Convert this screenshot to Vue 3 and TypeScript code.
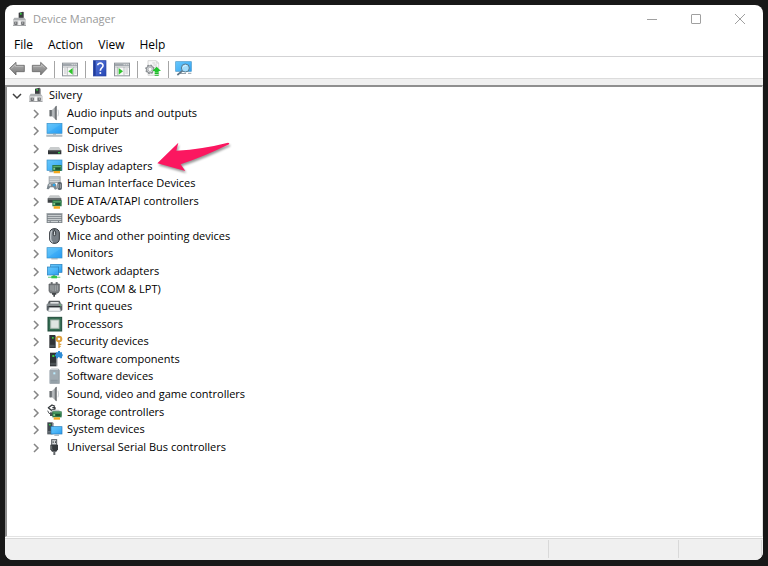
<script setup lang="ts">
import { ref } from 'vue'

interface DeviceClass {
  label: string
  icon: string
  marked?: boolean
}

const expanded = ref(true)
const menus: string[] = ['File', 'Action', 'View', 'Help']
const devices: DeviceClass[] = [
  { label: 'Audio inputs and outputs', icon: 'audio' },
  { label: 'Computer', icon: 'computer' },
  { label: 'Disk drives', icon: 'disk' },
  { label: 'Display adapters', icon: 'display', marked: true },
  { label: 'Human Interface Devices', icon: 'hid' },
  { label: 'IDE ATA/ATAPI controllers', icon: 'ide' },
  { label: 'Keyboards', icon: 'keyboard' },
  { label: 'Mice and other pointing devices', icon: 'mouse' },
  { label: 'Monitors', icon: 'monitor' },
  { label: 'Network adapters', icon: 'network' },
  { label: 'Ports (COM & LPT)', icon: 'port' },
  { label: 'Print queues', icon: 'printer' },
  { label: 'Processors', icon: 'cpu' },
  { label: 'Security devices', icon: 'security' },
  { label: 'Software components', icon: 'component' },
  { label: 'Software devices', icon: 'software' },
  { label: 'Sound, video and game controllers', icon: 'audio' },
  { label: 'Storage controllers', icon: 'storage' },
  { label: 'System devices', icon: 'system' },
  { label: 'Universal Serial Bus controllers', icon: 'usb' },
]
</script>

<template>
  <svg class="defs" aria-hidden="true">
    <defs>
      <linearGradient id="screen" x1="0" y1="0" x2="1" y2="1">
        <stop offset="0" stop-color="#66c6fb" />
        <stop offset="0.5" stop-color="#4db7f8" />
        <stop offset="1" stop-color="#2c9cf0" />
      </linearGradient>
      <linearGradient id="metal" x1="0" y1="0" x2="1" y2="0">
        <stop offset="0" stop-color="#5c6064" />
        <stop offset="0.5" stop-color="#c0c4c7" />
        <stop offset="1" stop-color="#777b7f" />
      </linearGradient>
      <linearGradient id="arrowfill" x1="0" y1="0" x2="0" y2="1">
        <stop offset="0" stop-color="#b4b4b4" />
        <stop offset="1" stop-color="#777777" />
      </linearGradient>
      <linearGradient id="book" x1="0" y1="0" x2="1" y2="1">
        <stop offset="0" stop-color="#5577dc" />
        <stop offset="1" stop-color="#2747b5" />
      </linearGradient>
      <g id="hub">
        <path d="M19 3 32 0 35 3V19H19Z" fill="#3b3e40" />
        <path d="M32 0 35 3V19H32Z" fill="#707375" />
        <rect x="23" y="4" width="5" height="5" fill="#35c840" />
        <path d="M6 18H36L41 25V42H2V25Z" fill="#aeb1b3" />
        <path d="M2 25H41V43H2Z" fill="#d2d3d4" />
        <path d="M2 40H41V43H2Z" fill="#a3a5a7" />
        <path d="M6 30H15V39H6ZM27 30H36V39H27Z" fill="#54575a" />
        <path d="M18 27H25V40H18Z" fill="#f6f6f6" />
        <path d="M9 32H12V36H9ZM30 32H33V36H30Z" fill="#f0f0f0" />
      </g>
      <g id="board">
        <path d="M19 21H47V39H19Z" fill="#2f7a4a" />
        <path d="M22 24H45V27H22Z" fill="#5cab6c" />
        <path d="M29 29H42V35H29Z" fill="#1d5433" />
        <path d="M22 29H27V35H22Z" fill="#82c287" />
        <path d="M23 39H42V46H23Z" fill="#f4aa22" />
      </g>
    </defs>
  </svg>

  <main class="window">
    <header class="titlebar">
      <svg class="app-icon" viewBox="0 0 48 48" aria-hidden="true"><use href="#hub" x="1" y="2" /></svg>
      <h1>Device Manager</h1>
      <div class="window-buttons">
        <button type="button" aria-label="Minimize">
          <svg viewBox="0 0 12 12"><path d="M1 6.5H11" /></svg>
        </button>
        <button type="button" aria-label="Maximize">
          <svg viewBox="0 0 12 12"><rect x="1.5" y="1.5" width="9" height="9" rx="0.5" /></svg>
        </button>
        <button type="button" aria-label="Close">
          <svg viewBox="0 0 12 12"><path d="M1 1 11 11M11 1 1 11" /></svg>
        </button>
      </div>
    </header>

    <nav class="menubar" aria-label="Menu">
      <button v-for="menu in menus" :key="menu" type="button">{{ menu }}</button>
    </nav>

    <div class="toolbar" role="toolbar" aria-label="Tools">
      <button type="button" aria-label="Back">
        <svg viewBox="0 0 48 48">
          <path d="M2 22 21 4V13H46V32H21V42Z" fill="url(#arrowfill)" stroke="#696969" stroke-width="2.5" stroke-linejoin="round" />
          <path d="M7 22 19 11V16H43" fill="none" stroke="#c9c9c9" stroke-width="2" />
        </svg>
      </button>
      <button type="button" aria-label="Forward">
        <svg viewBox="0 0 48 48">
          <path d="M48 22 29 4V13H4V32H29V42Z" fill="url(#arrowfill)" stroke="#696969" stroke-width="2.5" stroke-linejoin="round" />
          <path d="M7 16H31V11L41 20" fill="none" stroke="#c9c9c9" stroke-width="2" />
        </svg>
      </button>
      <span class="separator"></span>
      <button type="button" aria-label="Show or hide console tree">
        <svg viewBox="0 0 48 48">
          <rect x="1.5" y="6.5" width="45" height="38" fill="#f8f8f8" stroke="#8c9298" stroke-width="3" />
          <path d="M3 8H45V15H3Z" fill="#a1a7ad" />
          <path d="M29 11H32M35 11H38M41 11H44" stroke="#f8f8f8" stroke-width="3" />
          <path d="M3 18H45" stroke="#8c9298" stroke-width="2" />
          <path d="M16 18V43M35 18V43" stroke="#a2a7ab" stroke-width="2" />
          <path d="M6 24H13M6 30H13M6 36H13M38 24H43M38 30H43M38 36H43" stroke="#aaaeb2" stroke-width="2" />
          <path d="M32 21V41L19 31Z" fill="#2fc32c" />
        </svg>
      </button>
      <span class="separator"></span>
      <button class="help" type="button" aria-label="Help">
        <svg viewBox="0 0 48 48">
          <rect x="1" y="-1" width="38" height="46" fill="url(#book)" stroke="#28429e" stroke-width="2" />
          <path d="M2 0H8V44H2Z" fill="#203c9b" />
          <path d="M14 13C14 4 31 4 30 14C30 20 22 21 22 29" fill="none" stroke="#f7f9ff" stroke-width="5" />
          <circle cx="22" cy="36" r="3" fill="#f7f9ff" />
        </svg>
      </button>
      <button type="button" aria-label="Show or hide action pane">
        <svg viewBox="0 0 48 48">
          <rect x="1.5" y="6.5" width="45" height="38" fill="#f8f8f8" stroke="#8c9298" stroke-width="3" />
          <path d="M3 8H45V15H3Z" fill="#a1a7ad" />
          <path d="M29 11H32M35 11H38M41 11H44" stroke="#f8f8f8" stroke-width="3" />
          <path d="M3 18H45" stroke="#8c9298" stroke-width="2" />
          <path d="M11 18V43M30 18V43" stroke="#a2a7ab" stroke-width="2" />
          <path d="M4 24H8M4 30H8M4 36H8M34 24H42M34 30H42M34 36H42" stroke="#aaaeb2" stroke-width="2" />
          <path d="M14 21V41L27 31Z" fill="#2fc32c" />
        </svg>
      </button>
      <span class="separator"></span>
      <button type="button" aria-label="Scan for hardware changes">
        <svg viewBox="0 0 48 48">
          <path d="M9 -1H34L41 6V43H9Z" fill="#fafafa" stroke="#c6c6c6" stroke-width="2" />
          <path d="M34 0V7H41" fill="#dddddd" stroke="#bababa" stroke-width="1" />
          <path d="M22 6H31M25 12H36M30 18H37" stroke="#b8b8b8" stroke-width="2" />
          <circle cx="15" cy="25" r="9" fill="none" stroke="#8d9195" stroke-width="7" />
          <circle cx="15" cy="25" r="12" fill="none" stroke="#8d9195" stroke-width="5" stroke-dasharray="5 4.42" />
          <circle cx="15" cy="25" r="8" fill="none" stroke="#d4d7d9" stroke-width="3" />
          <path d="M35 17 48 30H41V35H29V30H22Z" fill="#20c52b" />
          <path d="M29 36H41V39H29ZM29 41H41V44H29Z" fill="#20b529" />
        </svg>
      </button>
      <span class="separator"></span>
      <button type="button" aria-label="Show devices and printers">
        <svg viewBox="0 0 48 48">
          <rect x="-1" y="2" width="47" height="29" fill="url(#screen)" stroke="#4998c9" stroke-width="2" />
          <path d="M8 36H30V39H8Z" fill="#98a4ad" />
          <path d="M20 29 4 42" stroke="#607788" stroke-width="5" />
          <circle cx="28" cy="21" r="12" fill="#a1dcfb" stroke="#597c91" stroke-width="3" />
          <path d="M21 19Q24 12 32 14" fill="none" stroke="#e4f7ff" stroke-width="3" />
          <path d="M36 37H46" stroke="#98a4ad" stroke-width="3" />
        </svg>
      </button>
    </div>

    <section class="tree" aria-label="Devices">
      <ul class="rows">
        <li class="row root">
          <button class="toggle" type="button" aria-label="Silvery" :aria-expanded="expanded" @click="expanded = !expanded">
            <svg v-if="expanded" viewBox="0 0 12 12"><path class="open" d="M2 4 6 8 10 4" /></svg>
            <svg v-else viewBox="0 0 12 12"><path d="M4 2 8 6 4 10" /></svg>
          </button>
          <svg class="icon" viewBox="0 0 48 48" aria-hidden="true"><use href="#hub" x="-1" y="2" /></svg>
          <span>Silvery</span>
        </li>
        <template v-if="expanded">
          <li v-for="device in devices" :key="device.label" class="row child">
            <button class="toggle" type="button" :aria-label="device.label" aria-expanded="false">
              <svg viewBox="0 0 12 12"><path d="M4 2 8 6 4 10" /></svg>
            </button>
            <svg class="icon" viewBox="0 0 48 48" aria-hidden="true">
              <g v-if="device.icon === 'audio'">
                <path d="M11 15H18L31 2V46L18 34H11Z" fill="url(#metal)" />
                <path d="M11 15H17V34H11Z" fill="#696e72" />
                <path d="M28 5 32 2V46L28 43Z" fill="#65696d" />
                <path d="M36 14Q40 24 36 34" fill="none" stroke="#b4bdc4" stroke-width="2" />
              </g>
              <g v-else-if="device.icon === 'computer'">
                <rect x="3" y="4" width="45" height="30" fill="url(#screen)" stroke="#378fc7" stroke-width="2" />
                <path d="M4 33 47 5V33Z" fill="#229df4" opacity="0.3" />
                <path d="M21 35H30V38H21Z" fill="#849cac" />
                <path d="M1 38H49V44H1Z" fill="#a8b5bd" />
                <path d="M1 38H49V40H1Z" fill="#cbd3d8" />
              </g>
              <g v-else-if="device.icon === 'disk'">
                <path d="M13 21H39L46 31H6Z" fill="#c9cccd" />
                <path d="M6 31H46V43H6Z" fill="#303437" />
                <path d="M8 32H44V34H8Z" fill="#606669" />
                <rect x="36" y="36" width="6" height="4" fill="#2ec84d" />
              </g>
              <g v-else-if="device.icon === 'display'">
                <rect x="3" y="6" width="45" height="31" fill="url(#screen)" stroke="#378fc7" stroke-width="2" />
                <path d="M10 39H23V43H10Z" fill="#8da0ac" />
                <use href="#board" />
              </g>
              <g v-else-if="device.icon === 'hid'">
                <path d="M8 4H44V24H8Z" fill="#a3a9ad" />
                <path d="M11 9H41M11 14H41M11 19H41" stroke="#d9dddf" stroke-width="3" />
                <path d="M2 42 5 29Q9 21 14 25H21Q28 22 31 30L33 42 27 44 22 37H13L8 43Z" fill="#7d8890" />
                <path d="M8 30H15M12 27V34" stroke="#f4f7f8" stroke-width="2" />
                <circle cx="24" cy="30" r="4" fill="#2ca5e8" />
                <rect x="34" y="21" width="14" height="24" rx="6" fill="#5e676e" />
                <path d="M38 27V39M44 27V39" stroke="#b5bdc3" stroke-width="2" />
              </g>
              <g v-else-if="device.icon === 'ide'">
                <path d="M12 7H39L46 16H5Z" fill="#c4c7c8" />
                <path d="M5 16H46V29H5Z" fill="#3d4144" />
                <path d="M7 18H44V20H7Z" fill="#777b7d" />
                <use href="#board" y="1" />
              </g>
              <g v-else-if="device.icon === 'keyboard'">
                <path d="M2 10H49V39H2Z" fill="#7b8287" />
                <path d="M2 10H49V13H2Z" fill="#a6adb1" />
                <path d="M5 17H46M5 23H46M5 29H46" stroke="#d5d9db" stroke-width="3" />
                <path d="M5 35H11M14 35H36M39 35H46" stroke="#dce0e2" stroke-width="3" />
              </g>
              <g v-else-if="device.icon === 'mouse'">
                <rect x="11" y="2" width="29" height="44" rx="13" fill="#777f86" stroke="#33383d" stroke-width="3" />
                <path d="M17 8Q14 14 14 25V32Q14 40 20 43" fill="none" stroke="#c1c8cd" stroke-width="4" />
                <path d="M25 3V23" stroke="#33383d" stroke-width="2" />
                <rect x="22" y="9" width="7" height="14" rx="3" fill="#d1d7db" stroke="#33383d" stroke-width="3" />
              </g>
              <g v-else-if="device.icon === 'monitor'">
                <rect x="3" y="8" width="45" height="31" fill="url(#screen)" stroke="#378fc7" stroke-width="2" />
                <path d="M4 38 47 9V38Z" fill="#229df4" opacity="0.3" />
                <path d="M16 40H35V43H16Z" fill="#8da0ac" />
              </g>
              <g v-else-if="device.icon === 'network'">
                <rect x="14" y="4" width="34" height="24" fill="url(#screen)" stroke="#257db9" stroke-width="2" />
                <rect x="4" y="12" width="34" height="24" fill="url(#screen)" stroke="#257db9" stroke-width="2" />
                <path d="M20 37H28V40H20Z" fill="#3a9d4e" />
                <path d="M6 41H43V45H6Z" fill="#8fd899" />
                <path d="M16 39H33V46H16Z" fill="#31c34f" />
              </g>
              <g v-else-if="device.icon === 'port'">
                <path d="M14 3H20V10H14ZM29 3H35V10H29Z" fill="#74787b" />
                <path d="M9 9H40V30L36 36H13L9 30Z" fill="#7d8184" stroke="#4b4f52" stroke-width="2" />
                <path d="M15 13V28M21 13V30M28 13V30M34 13V28" stroke="#b7bbbd" stroke-width="2" />
                <path d="M18 36H31V41H27V47H22V41H18Z" fill="#414548" />
              </g>
              <g v-else-if="device.icon === 'printer'">
                <path d="M9 8H41L45 17H5Z" fill="#585d60" />
                <path d="M13 12H38V18H13Z" fill="#dfe2e3" />
                <rect x="2" y="17" width="47" height="21" rx="3" fill="#596065" />
                <path d="M3 19H48V23H3Z" fill="#9ca2a6" />
                <path d="M10 28H41L44 40H7Z" fill="#f4f5f6" stroke="#9da5a9" stroke-width="2" />
                <path d="M8 26H42" stroke="#25292b" stroke-width="3" />
                <rect x="40" y="20" width="5" height="3" fill="#54c96b" />
              </g>
              <g v-else-if="device.icon === 'cpu'">
                <rect x="6" y="4" width="41" height="41" fill="#326a50" stroke="#214b3a" stroke-width="3" />
                <rect x="10" y="8" width="33" height="33" fill="none" stroke="#588a71" stroke-width="1" stroke-dasharray="2 2" />
                <rect x="14" y="12" width="25" height="25" fill="#dfe5e2" stroke="#a6b7ad" stroke-width="3" />
              </g>
              <g v-else-if="device.icon === 'security'">
                <path d="M10 6H27V45H10Z" fill="#303437" />
                <path d="M27 6 30 9V45H27Z" fill="#72787c" />
                <rect x="18" y="12" width="5" height="5" fill="#35d33c" />
                <path d="M11 37H26M11 41H26" stroke="#646b6f" stroke-width="2" />
                <circle cx="39" cy="18" r="7" fill="none" stroke="#dda03c" stroke-width="6" />
                <path d="M39 25V45M39 34H46M39 40H44" fill="none" stroke="#dda03c" stroke-width="4" />
              </g>
              <g v-else-if="device.icon === 'component'">
                <path d="M12 5H31V46H12Z" fill="#303437" />
                <path d="M31 5 34 8V46H31Z" fill="#72787c" />
                <rect x="19" y="12" width="6" height="6" fill="#35d33c" />
                <path d="M13 37H30M13 41H30" stroke="#646b6f" stroke-width="2" />
                <path d="M30 4H36V0H42V4H48V10H50V16H48V22H41V19H36V22H30V16H27V10H30Z" fill="#2e8bd4" />
              </g>
              <g v-else-if="device.icon === 'software'">
                <path d="M16 2H37L41 7V47H11V7Z" fill="#8a959c" />
                <path d="M16 2H35L38 7H11Z" fill="#cad1d5" />
                <path d="M11 7H38V46H11Z" fill="#a0abb2" />
                <path d="M14 37H35M14 42H35" stroke="#7d8b94" stroke-width="2" />
                <rect x="22" y="13" width="6" height="6" fill="#bbecff" />
              </g>
              <g v-else-if="device.icon === 'storage'">
                <path d="M27 7 18 3 7 11 16 19 27 15V11H19" fill="none" stroke="#34393c" stroke-width="4" stroke-linejoin="round" />
                <path d="M5 20 9 28 18 31" fill="none" stroke="#54595c" stroke-width="3" />
                <path d="M20 17H38L46 25H12Z" fill="#c4c8ca" />
                <path d="M12 25H46V36H12Z" fill="#4b5053" />
                <use href="#board" y="1" />
              </g>
              <g v-else-if="device.icon === 'system'">
                <path d="M4 4H20V40H4Z" fill="#3f474d" />
                <path d="M20 4 23 7V40H20Z" fill="#879096" />
                <rect x="9" y="9" width="5" height="4" fill="#33d348" />
                <path d="M6 32H17M6 36H17" stroke="#89939a" stroke-width="2" />
                <rect x="15" y="17" width="33" height="22" fill="url(#screen)" stroke="#257db9" stroke-width="2" />
                <path d="M25 41H39V44H25Z" fill="#8b9ca7" />
              </g>
              <g v-else-if="device.icon === 'usb'">
                <rect x="17" y="2" width="15" height="16" fill="#d2d5d7" stroke="#54595d" stroke-width="3" />
                <path d="M20 7H23V12H20ZM27 7H30V12H27Z" fill="#4a4e51" />
                <path d="M13 17H36V31L31 38H18L13 31Z" fill="#35393c" />
                <path d="M17 20V30L20 34" fill="none" stroke="#6e7377" stroke-width="3" />
                <path d="M22 38H28V48H22Z" fill="#65696c" />
              </g>
            </svg>
            <span>{{ device.label }}</span>
            <svg v-if="device.marked" class="pointer" viewBox="81 186 219 90" aria-hidden="true">
              <path d="M82 250 145 188 139 212Q220 207 294 188Q300 189 297 193Q222 230 152 253L166 273Z" />
            </svg>
          </li>
        </template>
      </ul>
    </section>

    <footer class="statusbar"><span></span><span></span><span></span></footer>
  </main>
</template>

<style>
body {
  margin: 0;
  background: #181818;
}
</style>

<style scoped>
.defs {
  position: absolute;
  width: 0;
  height: 0;
}

.window {
  display: flex;
  flex-direction: column;
  box-sizing: border-box;
  min-height: calc(100vh - 11px);
  margin: 5px 5px 6px;
  overflow: hidden;
  border-radius: 8px;
  background: #ffffff;
  color: #000000;
  font: 11px/16px "Open Sans", "Noto Sans", sans-serif;
}

button {
  padding: 0;
  border: 0;
  background: none;
  color: inherit;
  font: inherit;
}

svg {
  display: block;
  flex: none;
  overflow: visible;
}

.titlebar {
  display: flex;
  align-items: center;
  height: 28px;
  padding: 0 1px 0 7px;
  color: #9a9a9a;
}

.app-icon {
  width: 16px;
  height: 16px;
}

h1 {
  flex: 1;
  margin: 0 0 0 5px;
  font: inherit;
}

.window-buttons {
  display: flex;
  align-self: stretch;
}

.window-buttons button {
  display: grid;
  place-items: center;
  width: 44px;
}

.window-buttons svg {
  width: 12px;
  height: 12px;
  fill: none;
  stroke: #a0a0a0;
  stroke-width: 1;
}

.menubar {
  display: flex;
  gap: 15px;
  height: 23px;
  padding-left: 9px;
  border-bottom: 1px solid #d3d3d5;
  font-size: 12px;
}

.toolbar {
  display: flex;
  align-items: center;
  gap: 6px;
  height: 18px;
  padding: 3px 4px 0;
  border-bottom: 1px solid #dcdcdc;
}

.toolbar svg {
  width: 16px;
  height: 16px;
}

.toolbar .help {
  width: 15px;
}

.separator {
  width: 1px;
  height: 17px;
  margin: 0 1px;
  background: #a5a5a5;
}

.tree {
  flex: 1;
  margin-top: 6px;
  padding-bottom: 4px;
  border-top: 2px solid #8f8f8f;
  border-right: 1px solid #e3e3e3;
  border-bottom: 1px solid #e3e3e3;
  border-left: 2px solid #8f8f8f;
  box-shadow: 0 -6px #f0f0f0;
}

.rows {
  display: grid;
  grid-template-rows: repeat(21, 1fr);
  height: 369px;
  margin: 0;
  padding: 0;
  list-style: none;
}

.row {
  position: relative;
  display: flex;
  align-items: center;
  padding: 0 0 1px 4px;
  white-space: nowrap;
}

.child {
  padding-left: 23px;
}

.toggle {
  padding-top: 2px;
}

.toggle svg {
  width: 12px;
  height: 12px;
  fill: none;
  stroke: #858585;
  stroke-width: 1.5;
}

.toggle .open {
  stroke: #404040;
}

.icon {
  width: 16px;
  height: 16px;
  margin: 0 5px 0 4px;
}

.root .icon {
  margin: 0 4px 0 6px;
}

.pointer {
  position: absolute;
  top: -15px;
  left: 150px;
  width: 73px;
  height: 30px;
  fill: #fb1760;
  filter: drop-shadow(1px 2px 1px #00000066);
}

.statusbar {
  display: grid;
  grid-template-columns: 1fr 130px 83px;
  height: 21px;
  margin-top: 1px;
  padding-right: 1px;
  border-top: 1px solid #d9d9d9;
  background: #f0f0f0;
}

.statusbar span {
  margin: 1px 0 2px;
  border-right: 1px solid #d9d9d9;
}
</style>
